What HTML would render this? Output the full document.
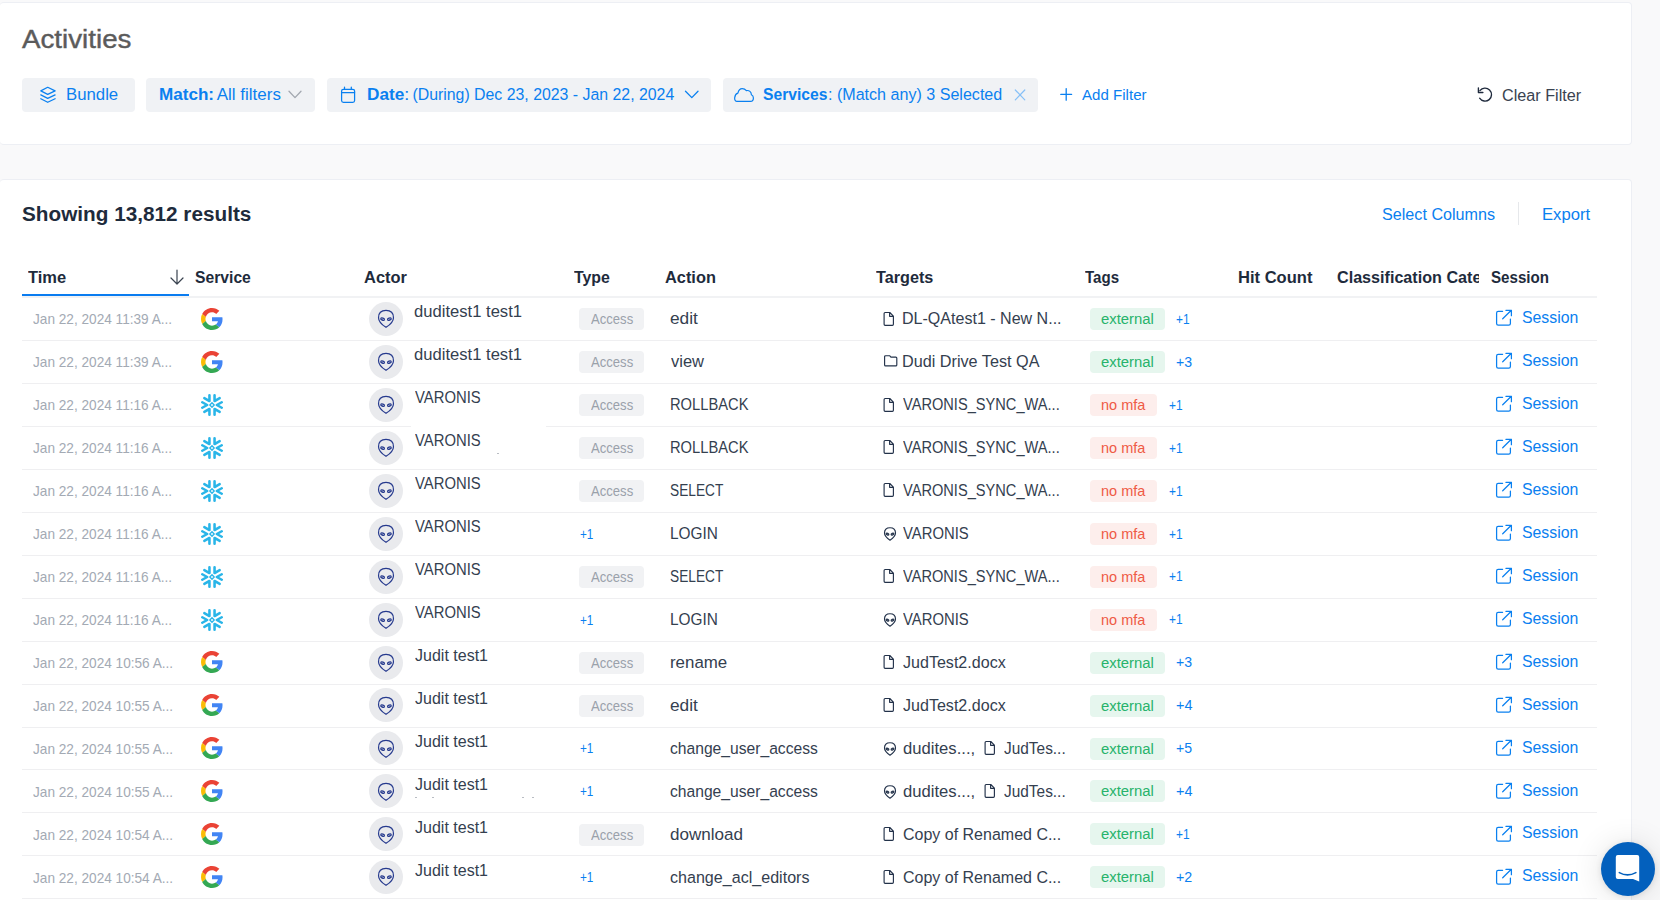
<!DOCTYPE html>
<html><head><meta charset="utf-8"><style>
html,body{margin:0;padding:0;}
body{width:1660px;height:900px;overflow:hidden;position:relative;background:#f9f9fa;font-family:"Liberation Sans",sans-serif;}
.t{position:absolute;white-space:pre;transform-origin:0 0;font-family:"Liberation Sans",sans-serif;}
svg{display:block;}
</style></head><body>
<div style="position:absolute;left:0px;top:2px;width:1632px;height:143px;background:#fff;border-radius:4px;box-sizing:border-box;border:1px solid #edeff4;border-left:none;"></div>
<div style="position:absolute;left:0px;top:179px;width:1632px;height:760px;background:#fff;border-radius:4px;box-sizing:border-box;border:1px solid #edeff4;border-left:none;"></div>
<span class="t" style="left:22.15px;top:26.93px;font-size:25.00px;line-height:25.00px;font-weight:400;color:#5b5b5b;transform:scaleX(1.1095);-webkit-text-stroke:0.4px #5b5b5b;">Activities</span>
<div style="position:absolute;left:22px;top:78px;width:113px;height:34px;background:#f0f2f5;border-radius:4px;"></div>
<div style="position:absolute;left:146px;top:78px;width:169px;height:34px;background:#f0f2f5;border-radius:4px;"></div>
<div style="position:absolute;left:327px;top:78px;width:384px;height:34px;background:#f0f2f5;border-radius:4px;"></div>
<div style="position:absolute;left:723px;top:78px;width:315px;height:34px;background:#f0f2f5;border-radius:4px;"></div>
<span class="t" style="left:66.22px;top:86.10px;font-size:16.30px;line-height:16.30px;font-weight:400;color:#0a80f0;transform:scaleX(1.0293);">Bundle</span>
<span class="t" style="left:158.86px;top:86.10px;font-size:16.30px;line-height:16.30px;font-weight:700;color:#0a80f0;transform:scaleX(1.0494);">Match:</span>
<span class="t" style="left:212.60px;top:86.10px;font-size:16.30px;line-height:16.30px;font-weight:400;color:#0a80f0;transform:scaleX(1.0425);"> All filters</span>
<span class="t" style="left:367.25px;top:86.10px;font-size:16.30px;line-height:16.30px;font-weight:700;color:#0a80f0;transform:scaleX(1.0558);">Date</span>
<span class="t" style="left:404.03px;top:86.10px;font-size:16.30px;line-height:16.30px;font-weight:400;color:#0a80f0;transform:scaleX(1.2058);">:</span>
<span class="t" style="left:408.24px;top:86.10px;font-size:16.30px;line-height:16.30px;font-weight:400;color:#0a80f0;transform:scaleX(0.9740);"> (During) Dec 23, 2023 - Jan 22, 2024</span>
<span class="t" style="left:763.45px;top:86.10px;font-size:16.30px;line-height:16.30px;font-weight:700;color:#0a80f0;transform:scaleX(0.9618);">Services</span>
<span class="t" style="left:827.62px;top:86.10px;font-size:16.30px;line-height:16.30px;font-weight:400;color:#0a80f0;transform:scaleX(0.9873);">: (Match any) 3 Selected</span>
<span class="t" style="left:1082.47px;top:87.75px;font-size:14.82px;line-height:14.82px;font-weight:400;color:#0a80f0;transform:scaleX(1.0185);">Add Filter</span>
<span class="t" style="left:1502.48px;top:86.87px;font-size:16.22px;line-height:16.22px;font-weight:400;color:#3a4350;transform:scaleX(0.9990);">Clear Filter</span>
<svg style="position:absolute;left:36px;top:82px;" width="24" height="24" viewBox="0 0 24 24" fill="none"><g stroke="#0a80f0" stroke-width="1.25" stroke-linejoin="round" stroke-linecap="round"><path d="M11.7 5.3 L19.1 8.9 L11.7 12.4 L4.8 8.9 Z"/><path d="M4.8 12.9 L11.7 16.4 L19.1 12.9"/><path d="M4.8 16.7 L11.7 20.3 L19.1 16.7"/></g></svg>
<svg style="position:absolute;left:286px;top:88px;" width="18" height="14" viewBox="0 0 18 14" fill="none"><path d="M3 3.2 L9 9.6 L15 3.2" stroke="#a3a8b0" stroke-width="1.3" stroke-linecap="round" stroke-linejoin="round"/></svg>
<svg style="position:absolute;left:336px;top:82px;" width="24" height="24" viewBox="0 0 24 24" fill="none"><g stroke="#0a80f0" stroke-width="1.25" stroke-linecap="round"><rect x="5.6" y="7.3" width="13" height="13" rx="1.8"/><path d="M5.6 10.5 H18.6 M8.5 5 V7.3 M15.3 5 V7.3"/></g></svg>
<svg style="position:absolute;left:682px;top:88px;" width="18" height="14" viewBox="0 0 18 14" fill="none"><path d="M3.5 3.2 L9.8 9.6 L16 3.2" stroke="#0a80f0" stroke-width="1.3" stroke-linecap="round" stroke-linejoin="round"/></svg>
<svg style="position:absolute;left:728px;top:82px;" width="32" height="26" viewBox="0 0 32 26" fill="none"><path d="M8.7 19.3 C6.9 19.3 6.5 17.2 6.7 15.6 C7 13.6 8.3 11.6 9.9 11.2 C10.6 8.1 12.2 6.6 14.2 6.6 C16 6.6 17.3 7.3 18.4 8.6 C21.2 8 23.3 9.9 23.4 12.7 C24.9 13.4 25.4 14.7 25.4 15.9 C25.4 18 24.1 19.3 22.5 19.3 Z" stroke="#0a80f0" stroke-width="1.2" stroke-linejoin="round"/></svg>
<svg style="position:absolute;left:1012px;top:87px;" width="16" height="16" viewBox="0 0 16 16" fill="none"><path d="M3.3 3 L12.8 12.8 M12.8 3 L3.3 12.8" stroke="#86c0f7" stroke-width="1.2" stroke-linecap="round"/></svg>
<svg style="position:absolute;left:1057px;top:85px;" width="18" height="18" viewBox="0 0 18 18" fill="none"><path d="M9.2 3.6 V15.2 M3.8 9.4 H14.6" stroke="#0a80f0" stroke-width="1.3" stroke-linecap="round"/></svg>
<svg style="position:absolute;left:1472px;top:82px;" width="26" height="24" viewBox="0 0 26 24" fill="none"><g stroke="#1f2a3d" stroke-width="1.35" stroke-linecap="round" stroke-linejoin="round"><path d="M7.6 16.2 A6.5 6.5 0 1 0 7.9 8.6"/><path d="M6.4 5.8 V10.5 H10.9"/></g></svg>
<span class="t" style="left:21.60px;top:203.77px;font-size:20.82px;line-height:20.82px;font-weight:700;color:#1e2b3c;transform:scaleX(0.9965);">Showing 13,812 results</span>
<span class="t" style="left:1381.67px;top:206.00px;font-size:16.30px;line-height:16.30px;font-weight:400;color:#0a80f0;transform:scaleX(0.9920);">Select Columns</span>
<div style="position:absolute;left:1518px;top:202px;width:1px;height:23px;background:#e6e8eb;border-radius:0px;"></div>
<span class="t" style="left:1541.63px;top:206.00px;font-size:16.30px;line-height:16.30px;font-weight:400;color:#0a80f0;transform:scaleX(1.0237);">Export</span>
<span class="t" style="left:28.11px;top:269.13px;font-size:16.14px;line-height:16.14px;font-weight:700;color:#1e2b3c;transform:scaleX(1.0206);">Time</span>
<span class="t" style="left:195.25px;top:269.13px;font-size:16.14px;line-height:16.14px;font-weight:700;color:#1e2b3c;transform:scaleX(0.9729);">Service</span>
<span class="t" style="left:363.79px;top:269.13px;font-size:16.14px;line-height:16.14px;font-weight:700;color:#1e2b3c;transform:scaleX(1.0208);">Actor</span>
<span class="t" style="left:574.12px;top:269.13px;font-size:16.14px;line-height:16.14px;font-weight:700;color:#1e2b3c;transform:scaleX(0.9841);">Type</span>
<span class="t" style="left:664.69px;top:269.13px;font-size:16.14px;line-height:16.14px;font-weight:700;color:#1e2b3c;transform:scaleX(1.0145);">Action</span>
<span class="t" style="left:875.52px;top:269.13px;font-size:16.14px;line-height:16.14px;font-weight:700;color:#1e2b3c;transform:scaleX(1.0046);">Targets</span>
<span class="t" style="left:1085.13px;top:269.13px;font-size:16.14px;line-height:16.14px;font-weight:700;color:#1e2b3c;transform:scaleX(0.9351);">Tags</span>
<span class="t" style="left:1238.49px;top:269.13px;font-size:16.14px;line-height:16.14px;font-weight:700;color:#1e2b3c;transform:scaleX(1.0258);">Hit Count</span>
<div style="position:absolute;left:1330px;top:260px;width:149px;height:34px;overflow:hidden">
<span class="t" style="left:7.04px;top:9.13px;font-size:16.14px;line-height:16.14px;font-weight:700;color:#1e2b3c;transform:scaleX(1.0007);">Classification Categ</span>
</div>
<span class="t" style="left:1490.96px;top:269.13px;font-size:16.14px;line-height:16.14px;font-weight:700;color:#1e2b3c;transform:scaleX(0.9371);">Session</span>
<svg style="position:absolute;left:166px;top:266px;" width="22" height="22" viewBox="0 0 22 22" fill="none"><path d="M11 4 V17.8 M5 12 L11 18 L17 12" stroke="#3a4350" stroke-width="1.2" stroke-linecap="round" stroke-linejoin="round"/></svg>
<div style="position:absolute;left:22px;top:296px;width:1575px;height:2px;background:#f1f2f4;border-radius:0px;"></div>
<div style="position:absolute;left:22px;top:293.5px;width:167px;height:2.6px;background:#0a7cf0;border-radius:0px;"></div>
<div style="position:absolute;left:22px;top:340px;width:1575px;height:1px;background:#efeff1;border-radius:0px;"></div>
<span class="t" style="left:33.09px;top:312.15px;font-size:14.10px;line-height:14.10px;font-weight:400;color:#a3aab4;transform:scaleX(0.9666);">Jan 22, 2024 11:39 A...</span>
<svg style="position:absolute;left:201px;top:308px;" width="22" height="22" viewBox="0 0 48 48" fill="none"><path fill="#EA4335" d="M24 9.5c3.54 0 6.71 1.22 9.21 3.6l6.85-6.85C35.9 2.38 30.47 0 24 0 14.62 0 6.51 5.38 2.56 13.22l7.98 6.19C12.43 13.72 17.74 9.5 24 9.5z"/><path fill="#4285F4" d="M46.98 24.55c0-1.57-.15-3.09-.38-4.55H24v9.02h12.94c-.58 2.96-2.26 5.48-4.78 7.18l7.73 6c4.51-4.18 7.09-10.36 7.09-17.65z"/><path fill="#FBBC05" d="M10.53 28.59c-.48-1.45-.76-2.99-.76-4.59s.27-3.14.76-4.59l-7.98-6.19C.92 16.46 0 20.12 0 24c0 3.88.92 7.54 2.56 10.78l7.97-6.19z"/><path fill="#34A853" d="M24 48c6.48 0 11.93-2.13 15.89-5.81l-7.73-6c-2.15 1.45-4.92 2.3-8.16 2.3-6.26 0-11.57-4.22-13.47-9.91l-7.98 6.19C6.51 42.62 14.62 48 24 48z"/></svg>
<div style="position:absolute;left:369px;top:301.90px;width:34px;height:34px;border-radius:50%;background:#e9eaed"></div>
<svg style="position:absolute;left:366px;top:299.09999999999997px;" width="40" height="40" viewBox="0 0 900 900" fill="none"><g stroke="#263a8e" stroke-width="27" fill="none" stroke-linejoin="round"><path d="M450 258 C557 258 618 322 618 420 C618 500 560 566 450 638 C340 566 282 500 282 420 C282 322 343 258 450 258 Z"/><ellipse cx="374" cy="452" rx="44" ry="24" transform="rotate(22 374 452)"/><ellipse cx="526" cy="452" rx="44" ry="24" transform="rotate(-22 526 452)"/></g><circle cx="362" cy="456" r="13" fill="#263a8e"/><circle cx="538" cy="456" r="13" fill="#263a8e"/></svg>
<span class="t" style="left:414.10px;top:303.30px;font-size:16.30px;line-height:16.30px;font-weight:400;color:#34404f;transform:scaleX(1.0200);">duditest1 test1</span>
<div style="position:absolute;left:579px;top:308px;width:65px;height:22px;background:#f1f2f4;border-radius:4px;"></div>
<span class="t" style="left:590.67px;top:312.25px;font-size:13.99px;line-height:13.99px;font-weight:400;color:#9aa1ab;transform:scaleX(0.9355);">Access</span>
<span class="t" style="left:670.27px;top:310.33px;font-size:16.26px;line-height:16.26px;font-weight:400;color:#34404f;transform:scaleX(1.0631);">edit</span>
<svg style="position:absolute;left:879px;top:307.59999999999997px;" width="20" height="22" viewBox="0 0 20 22" fill="none"><path d="M6.1 4.5 H10.8 L14.4 8.1 V16.3 A1 1 0 0 1 13.4 17.3 H6.1 A1 1 0 0 1 5.1 16.3 V5.5 A1 1 0 0 1 6.1 4.5 Z M10.6 4.6 V8.3 H14.3" stroke="#23324a" stroke-width="1.15" stroke-linejoin="round" fill="none"/></svg>
<span class="t" style="left:902.08px;top:310.30px;font-size:16.30px;line-height:16.30px;font-weight:400;color:#34404f;transform:scaleX(0.9854);">DL-QAtest1 - New N...</span>
<div style="position:absolute;left:1090px;top:308px;width:75px;height:22px;background:#e6f6ee;border-radius:4px;"></div>
<span class="t" style="left:1101.07px;top:312.02px;font-size:14.26px;line-height:14.26px;font-weight:400;color:#27b36b;transform:scaleX(1.0434);">external</span>
<span class="t" style="left:1176.02px;top:311.79px;font-size:14.66px;line-height:14.66px;font-weight:400;color:#0a80f0;transform:scaleX(0.8143);">+1</span>
<svg style="position:absolute;left:1490px;top:305.4px;" width="28" height="26" viewBox="0 0 28 26" fill="none"><g stroke="#0a80f0" stroke-width="1.25" stroke-linecap="round" stroke-linejoin="round" fill="none"><path d="M12.6 6.3 H8.2 A1.6 1.6 0 0 0 6.6 7.9 V18.6 A1.6 1.6 0 0 0 8.2 20.2 H18.8 A1.6 1.6 0 0 0 20.4 18.6 V14"/><path d="M12.7 13.8 L21.3 5.3 M15.9 5.3 H21.4 V10.7"/></g></svg>
<span class="t" style="left:1521.78px;top:309.07px;font-size:16.45px;line-height:16.45px;font-weight:400;color:#0a80f0;transform:scaleX(0.9629);">Session</span>
<div style="position:absolute;left:22px;top:383px;width:1575px;height:1px;background:#efeff1;border-radius:0px;"></div>
<span class="t" style="left:33.09px;top:355.10px;font-size:14.10px;line-height:14.10px;font-weight:400;color:#a3aab4;transform:scaleX(0.9666);">Jan 22, 2024 11:39 A...</span>
<svg style="position:absolute;left:201px;top:351px;" width="22" height="22" viewBox="0 0 48 48" fill="none"><path fill="#EA4335" d="M24 9.5c3.54 0 6.71 1.22 9.21 3.6l6.85-6.85C35.9 2.38 30.47 0 24 0 14.62 0 6.51 5.38 2.56 13.22l7.98 6.19C12.43 13.72 17.74 9.5 24 9.5z"/><path fill="#4285F4" d="M46.98 24.55c0-1.57-.15-3.09-.38-4.55H24v9.02h12.94c-.58 2.96-2.26 5.48-4.78 7.18l7.73 6c4.51-4.18 7.09-10.36 7.09-17.65z"/><path fill="#FBBC05" d="M10.53 28.59c-.48-1.45-.76-2.99-.76-4.59s.27-3.14.76-4.59l-7.98-6.19C.92 16.46 0 20.12 0 24c0 3.88.92 7.54 2.56 10.78l7.97-6.19z"/><path fill="#34A853" d="M24 48c6.48 0 11.93-2.13 15.89-5.81l-7.73-6c-2.15 1.45-4.92 2.3-8.16 2.3-6.26 0-11.57-4.22-13.47-9.91l-7.98 6.19C6.51 42.62 14.62 48 24 48z"/></svg>
<div style="position:absolute;left:369px;top:344.85px;width:34px;height:34px;border-radius:50%;background:#e9eaed"></div>
<svg style="position:absolute;left:366px;top:342.04999999999995px;" width="40" height="40" viewBox="0 0 900 900" fill="none"><g stroke="#263a8e" stroke-width="27" fill="none" stroke-linejoin="round"><path d="M450 258 C557 258 618 322 618 420 C618 500 560 566 450 638 C340 566 282 500 282 420 C282 322 343 258 450 258 Z"/><ellipse cx="374" cy="452" rx="44" ry="24" transform="rotate(22 374 452)"/><ellipse cx="526" cy="452" rx="44" ry="24" transform="rotate(-22 526 452)"/></g><circle cx="362" cy="456" r="13" fill="#263a8e"/><circle cx="538" cy="456" r="13" fill="#263a8e"/></svg>
<span class="t" style="left:414.10px;top:346.25px;font-size:16.30px;line-height:16.30px;font-weight:400;color:#34404f;transform:scaleX(1.0200);">duditest1 test1</span>
<div style="position:absolute;left:579px;top:351px;width:65px;height:22px;background:#f1f2f4;border-radius:4px;"></div>
<span class="t" style="left:590.67px;top:355.20px;font-size:13.99px;line-height:13.99px;font-weight:400;color:#9aa1ab;transform:scaleX(0.9355);">Access</span>
<span class="t" style="left:670.94px;top:353.28px;font-size:16.26px;line-height:16.26px;font-weight:400;color:#34404f;transform:scaleX(1.0159);">view</span>
<svg style="position:absolute;left:882.5px;top:352.84999999999997px;" width="16" height="16" viewBox="0 0 16 16" fill="none"><path d="M1.6 3.7 A1 1 0 0 1 2.6 2.7 H6.6 L7.9 4.1 H12.8 A1 1 0 0 1 13.8 5.1 V11.9 A1 1 0 0 1 12.8 12.9 H2.6 A1 1 0 0 1 1.6 11.9 Z" stroke="#23324a" stroke-width="1.15" stroke-linejoin="round" fill="none"/></svg>
<span class="t" style="left:902.07px;top:353.25px;font-size:16.30px;line-height:16.30px;font-weight:400;color:#34404f;transform:scaleX(0.9949);">Dudi Drive Test QA</span>
<div style="position:absolute;left:1090px;top:351px;width:75px;height:22px;background:#e6f6ee;border-radius:4px;"></div>
<span class="t" style="left:1101.07px;top:354.97px;font-size:14.26px;line-height:14.26px;font-weight:400;color:#27b36b;transform:scaleX(1.0434);">external</span>
<span class="t" style="left:1175.91px;top:354.74px;font-size:14.66px;line-height:14.66px;font-weight:400;color:#0a80f0;transform:scaleX(0.9633);">+3</span>
<svg style="position:absolute;left:1490px;top:348.34999999999997px;" width="28" height="26" viewBox="0 0 28 26" fill="none"><g stroke="#0a80f0" stroke-width="1.25" stroke-linecap="round" stroke-linejoin="round" fill="none"><path d="M12.6 6.3 H8.2 A1.6 1.6 0 0 0 6.6 7.9 V18.6 A1.6 1.6 0 0 0 8.2 20.2 H18.8 A1.6 1.6 0 0 0 20.4 18.6 V14"/><path d="M12.7 13.8 L21.3 5.3 M15.9 5.3 H21.4 V10.7"/></g></svg>
<span class="t" style="left:1521.78px;top:352.02px;font-size:16.45px;line-height:16.45px;font-weight:400;color:#0a80f0;transform:scaleX(0.9629);">Session</span>
<div style="position:absolute;left:22px;top:426px;width:1575px;height:1px;background:#efeff1;border-radius:0px;"></div>
<div style="position:absolute;left:411px;top:426px;width:135px;height:1px;background:#fff;border-radius:0px;"></div>
<span class="t" style="left:33.09px;top:398.05px;font-size:14.10px;line-height:14.10px;font-weight:400;color:#a3aab4;transform:scaleX(0.9666);">Jan 22, 2024 11:16 A...</span>
<svg style="position:absolute;left:201px;top:394px;" width="22" height="22" viewBox="0 0 22.4 22.2" fill="none"><g stroke="#29b5e8" stroke-width="2.6" stroke-linecap="round" stroke-linejoin="round"><path d="M8.6 1.2 V7.1 L3.4 4.1"/><path d="M13.8 1.2 V7.1 L19 4.1"/><path d="M1.3 8.3 L6.3 11.1 L1.3 13.9"/><path d="M21.1 8.3 L16.1 11.1 L21.1 13.9"/><path d="M8.6 21 V15.1 L3.4 18.1"/><path d="M13.8 21 V15.1 L19 18.1"/></g><path d="M11.2 8.9 L13.4 11.1 L11.2 13.3 L9 11.1 Z" stroke="#29b5e8" stroke-width="1.4" fill="none"/></svg>
<div style="position:absolute;left:369px;top:387.80px;width:34px;height:34px;border-radius:50%;background:#e9eaed"></div>
<svg style="position:absolute;left:366px;top:384.99999999999994px;" width="40" height="40" viewBox="0 0 900 900" fill="none"><g stroke="#263a8e" stroke-width="27" fill="none" stroke-linejoin="round"><path d="M450 258 C557 258 618 322 618 420 C618 500 560 566 450 638 C340 566 282 500 282 420 C282 322 343 258 450 258 Z"/><ellipse cx="374" cy="452" rx="44" ry="24" transform="rotate(22 374 452)"/><ellipse cx="526" cy="452" rx="44" ry="24" transform="rotate(-22 526 452)"/></g><circle cx="362" cy="456" r="13" fill="#263a8e"/><circle cx="538" cy="456" r="13" fill="#263a8e"/></svg>
<span class="t" style="left:414.73px;top:389.20px;font-size:16.30px;line-height:16.30px;font-weight:400;color:#34404f;transform:scaleX(0.9116);">VARONIS</span>
<div style="position:absolute;left:579px;top:394px;width:65px;height:22px;background:#f1f2f4;border-radius:4px;"></div>
<span class="t" style="left:590.67px;top:398.15px;font-size:13.99px;line-height:13.99px;font-weight:400;color:#9aa1ab;transform:scaleX(0.9355);">Access</span>
<span class="t" style="left:669.79px;top:396.23px;font-size:16.26px;line-height:16.26px;font-weight:400;color:#34404f;transform:scaleX(0.9049);">ROLLBACK</span>
<svg style="position:absolute;left:879px;top:393.49999999999994px;" width="20" height="22" viewBox="0 0 20 22" fill="none"><path d="M6.1 4.5 H10.8 L14.4 8.1 V16.3 A1 1 0 0 1 13.4 17.3 H6.1 A1 1 0 0 1 5.1 16.3 V5.5 A1 1 0 0 1 6.1 4.5 Z M10.6 4.6 V8.3 H14.3" stroke="#23324a" stroke-width="1.15" stroke-linejoin="round" fill="none"/></svg>
<span class="t" style="left:903.34px;top:396.20px;font-size:16.30px;line-height:16.30px;font-weight:400;color:#34404f;transform:scaleX(0.8974);">VARONIS_SYNC_WA...</span>
<div style="position:absolute;left:1090px;top:394px;width:67px;height:22px;background:#fdeeec;border-radius:4px;"></div>
<span class="t" style="left:1101.04px;top:397.98px;font-size:14.19px;line-height:14.19px;font-weight:400;color:#ef5a45;transform:scaleX(1.0229);">no mfa</span>
<span class="t" style="left:1169.02px;top:397.69px;font-size:14.66px;line-height:14.66px;font-weight:400;color:#0a80f0;transform:scaleX(0.8143);">+1</span>
<svg style="position:absolute;left:1490px;top:391.29999999999995px;" width="28" height="26" viewBox="0 0 28 26" fill="none"><g stroke="#0a80f0" stroke-width="1.25" stroke-linecap="round" stroke-linejoin="round" fill="none"><path d="M12.6 6.3 H8.2 A1.6 1.6 0 0 0 6.6 7.9 V18.6 A1.6 1.6 0 0 0 8.2 20.2 H18.8 A1.6 1.6 0 0 0 20.4 18.6 V14"/><path d="M12.7 13.8 L21.3 5.3 M15.9 5.3 H21.4 V10.7"/></g></svg>
<span class="t" style="left:1521.78px;top:394.97px;font-size:16.45px;line-height:16.45px;font-weight:400;color:#0a80f0;transform:scaleX(0.9629);">Session</span>
<div style="position:absolute;left:22px;top:469px;width:1575px;height:1px;background:#efeff1;border-radius:0px;"></div>
<span class="t" style="left:33.09px;top:441.00px;font-size:14.10px;line-height:14.10px;font-weight:400;color:#a3aab4;transform:scaleX(0.9666);">Jan 22, 2024 11:16 A...</span>
<svg style="position:absolute;left:201px;top:437px;" width="22" height="22" viewBox="0 0 22.4 22.2" fill="none"><g stroke="#29b5e8" stroke-width="2.6" stroke-linecap="round" stroke-linejoin="round"><path d="M8.6 1.2 V7.1 L3.4 4.1"/><path d="M13.8 1.2 V7.1 L19 4.1"/><path d="M1.3 8.3 L6.3 11.1 L1.3 13.9"/><path d="M21.1 8.3 L16.1 11.1 L21.1 13.9"/><path d="M8.6 21 V15.1 L3.4 18.1"/><path d="M13.8 21 V15.1 L19 18.1"/></g><path d="M11.2 8.9 L13.4 11.1 L11.2 13.3 L9 11.1 Z" stroke="#29b5e8" stroke-width="1.4" fill="none"/></svg>
<div style="position:absolute;left:369px;top:430.75px;width:34px;height:34px;border-radius:50%;background:#e9eaed"></div>
<svg style="position:absolute;left:366px;top:427.95px;" width="40" height="40" viewBox="0 0 900 900" fill="none"><g stroke="#263a8e" stroke-width="27" fill="none" stroke-linejoin="round"><path d="M450 258 C557 258 618 322 618 420 C618 500 560 566 450 638 C340 566 282 500 282 420 C282 322 343 258 450 258 Z"/><ellipse cx="374" cy="452" rx="44" ry="24" transform="rotate(22 374 452)"/><ellipse cx="526" cy="452" rx="44" ry="24" transform="rotate(-22 526 452)"/></g><circle cx="362" cy="456" r="13" fill="#263a8e"/><circle cx="538" cy="456" r="13" fill="#263a8e"/></svg>
<span class="t" style="left:414.73px;top:432.15px;font-size:16.30px;line-height:16.30px;font-weight:400;color:#34404f;transform:scaleX(0.9116);">VARONIS</span>
<div style="position:absolute;left:579px;top:437px;width:65px;height:22px;background:#f1f2f4;border-radius:4px;"></div>
<span class="t" style="left:590.67px;top:441.10px;font-size:13.99px;line-height:13.99px;font-weight:400;color:#9aa1ab;transform:scaleX(0.9355);">Access</span>
<span class="t" style="left:669.79px;top:439.18px;font-size:16.26px;line-height:16.26px;font-weight:400;color:#34404f;transform:scaleX(0.9049);">ROLLBACK</span>
<svg style="position:absolute;left:879px;top:436.45px;" width="20" height="22" viewBox="0 0 20 22" fill="none"><path d="M6.1 4.5 H10.8 L14.4 8.1 V16.3 A1 1 0 0 1 13.4 17.3 H6.1 A1 1 0 0 1 5.1 16.3 V5.5 A1 1 0 0 1 6.1 4.5 Z M10.6 4.6 V8.3 H14.3" stroke="#23324a" stroke-width="1.15" stroke-linejoin="round" fill="none"/></svg>
<span class="t" style="left:903.34px;top:439.15px;font-size:16.30px;line-height:16.30px;font-weight:400;color:#34404f;transform:scaleX(0.8974);">VARONIS_SYNC_WA...</span>
<div style="position:absolute;left:1090px;top:437px;width:67px;height:22px;background:#fdeeec;border-radius:4px;"></div>
<span class="t" style="left:1101.04px;top:440.93px;font-size:14.19px;line-height:14.19px;font-weight:400;color:#ef5a45;transform:scaleX(1.0229);">no mfa</span>
<span class="t" style="left:1169.02px;top:440.64px;font-size:14.66px;line-height:14.66px;font-weight:400;color:#0a80f0;transform:scaleX(0.8143);">+1</span>
<svg style="position:absolute;left:1490px;top:434.25px;" width="28" height="26" viewBox="0 0 28 26" fill="none"><g stroke="#0a80f0" stroke-width="1.25" stroke-linecap="round" stroke-linejoin="round" fill="none"><path d="M12.6 6.3 H8.2 A1.6 1.6 0 0 0 6.6 7.9 V18.6 A1.6 1.6 0 0 0 8.2 20.2 H18.8 A1.6 1.6 0 0 0 20.4 18.6 V14"/><path d="M12.7 13.8 L21.3 5.3 M15.9 5.3 H21.4 V10.7"/></g></svg>
<span class="t" style="left:1521.78px;top:437.92px;font-size:16.45px;line-height:16.45px;font-weight:400;color:#0a80f0;transform:scaleX(0.9629);">Session</span>
<div style="position:absolute;left:22px;top:512px;width:1575px;height:1px;background:#efeff1;border-radius:0px;"></div>
<span class="t" style="left:33.09px;top:483.95px;font-size:14.10px;line-height:14.10px;font-weight:400;color:#a3aab4;transform:scaleX(0.9666);">Jan 22, 2024 11:16 A...</span>
<svg style="position:absolute;left:201px;top:480px;" width="22" height="22" viewBox="0 0 22.4 22.2" fill="none"><g stroke="#29b5e8" stroke-width="2.6" stroke-linecap="round" stroke-linejoin="round"><path d="M8.6 1.2 V7.1 L3.4 4.1"/><path d="M13.8 1.2 V7.1 L19 4.1"/><path d="M1.3 8.3 L6.3 11.1 L1.3 13.9"/><path d="M21.1 8.3 L16.1 11.1 L21.1 13.9"/><path d="M8.6 21 V15.1 L3.4 18.1"/><path d="M13.8 21 V15.1 L19 18.1"/></g><path d="M11.2 8.9 L13.4 11.1 L11.2 13.3 L9 11.1 Z" stroke="#29b5e8" stroke-width="1.4" fill="none"/></svg>
<div style="position:absolute;left:369px;top:473.70px;width:34px;height:34px;border-radius:50%;background:#e9eaed"></div>
<svg style="position:absolute;left:366px;top:470.9px;" width="40" height="40" viewBox="0 0 900 900" fill="none"><g stroke="#263a8e" stroke-width="27" fill="none" stroke-linejoin="round"><path d="M450 258 C557 258 618 322 618 420 C618 500 560 566 450 638 C340 566 282 500 282 420 C282 322 343 258 450 258 Z"/><ellipse cx="374" cy="452" rx="44" ry="24" transform="rotate(22 374 452)"/><ellipse cx="526" cy="452" rx="44" ry="24" transform="rotate(-22 526 452)"/></g><circle cx="362" cy="456" r="13" fill="#263a8e"/><circle cx="538" cy="456" r="13" fill="#263a8e"/></svg>
<span class="t" style="left:414.73px;top:475.10px;font-size:16.30px;line-height:16.30px;font-weight:400;color:#34404f;transform:scaleX(0.9116);">VARONIS</span>
<div style="position:absolute;left:579px;top:480px;width:65px;height:22px;background:#f1f2f4;border-radius:4px;"></div>
<span class="t" style="left:590.67px;top:484.05px;font-size:13.99px;line-height:13.99px;font-weight:400;color:#9aa1ab;transform:scaleX(0.9355);">Access</span>
<span class="t" style="left:670.38px;top:482.13px;font-size:16.26px;line-height:16.26px;font-weight:400;color:#34404f;transform:scaleX(0.8432);">SELECT</span>
<svg style="position:absolute;left:879px;top:479.4px;" width="20" height="22" viewBox="0 0 20 22" fill="none"><path d="M6.1 4.5 H10.8 L14.4 8.1 V16.3 A1 1 0 0 1 13.4 17.3 H6.1 A1 1 0 0 1 5.1 16.3 V5.5 A1 1 0 0 1 6.1 4.5 Z M10.6 4.6 V8.3 H14.3" stroke="#23324a" stroke-width="1.15" stroke-linejoin="round" fill="none"/></svg>
<span class="t" style="left:903.34px;top:482.10px;font-size:16.30px;line-height:16.30px;font-weight:400;color:#34404f;transform:scaleX(0.8974);">VARONIS_SYNC_WA...</span>
<div style="position:absolute;left:1090px;top:480px;width:67px;height:22px;background:#fdeeec;border-radius:4px;"></div>
<span class="t" style="left:1101.04px;top:483.88px;font-size:14.19px;line-height:14.19px;font-weight:400;color:#ef5a45;transform:scaleX(1.0229);">no mfa</span>
<span class="t" style="left:1169.02px;top:483.59px;font-size:14.66px;line-height:14.66px;font-weight:400;color:#0a80f0;transform:scaleX(0.8143);">+1</span>
<svg style="position:absolute;left:1490px;top:477.2px;" width="28" height="26" viewBox="0 0 28 26" fill="none"><g stroke="#0a80f0" stroke-width="1.25" stroke-linecap="round" stroke-linejoin="round" fill="none"><path d="M12.6 6.3 H8.2 A1.6 1.6 0 0 0 6.6 7.9 V18.6 A1.6 1.6 0 0 0 8.2 20.2 H18.8 A1.6 1.6 0 0 0 20.4 18.6 V14"/><path d="M12.7 13.8 L21.3 5.3 M15.9 5.3 H21.4 V10.7"/></g></svg>
<span class="t" style="left:1521.78px;top:480.87px;font-size:16.45px;line-height:16.45px;font-weight:400;color:#0a80f0;transform:scaleX(0.9629);">Session</span>
<div style="position:absolute;left:22px;top:555px;width:1575px;height:1px;background:#efeff1;border-radius:0px;"></div>
<span class="t" style="left:33.09px;top:526.90px;font-size:14.10px;line-height:14.10px;font-weight:400;color:#a3aab4;transform:scaleX(0.9666);">Jan 22, 2024 11:16 A...</span>
<svg style="position:absolute;left:201px;top:523px;" width="22" height="22" viewBox="0 0 22.4 22.2" fill="none"><g stroke="#29b5e8" stroke-width="2.6" stroke-linecap="round" stroke-linejoin="round"><path d="M8.6 1.2 V7.1 L3.4 4.1"/><path d="M13.8 1.2 V7.1 L19 4.1"/><path d="M1.3 8.3 L6.3 11.1 L1.3 13.9"/><path d="M21.1 8.3 L16.1 11.1 L21.1 13.9"/><path d="M8.6 21 V15.1 L3.4 18.1"/><path d="M13.8 21 V15.1 L19 18.1"/></g><path d="M11.2 8.9 L13.4 11.1 L11.2 13.3 L9 11.1 Z" stroke="#29b5e8" stroke-width="1.4" fill="none"/></svg>
<div style="position:absolute;left:369px;top:516.65px;width:34px;height:34px;border-radius:50%;background:#e9eaed"></div>
<svg style="position:absolute;left:366px;top:513.85px;" width="40" height="40" viewBox="0 0 900 900" fill="none"><g stroke="#263a8e" stroke-width="27" fill="none" stroke-linejoin="round"><path d="M450 258 C557 258 618 322 618 420 C618 500 560 566 450 638 C340 566 282 500 282 420 C282 322 343 258 450 258 Z"/><ellipse cx="374" cy="452" rx="44" ry="24" transform="rotate(22 374 452)"/><ellipse cx="526" cy="452" rx="44" ry="24" transform="rotate(-22 526 452)"/></g><circle cx="362" cy="456" r="13" fill="#263a8e"/><circle cx="538" cy="456" r="13" fill="#263a8e"/></svg>
<span class="t" style="left:414.73px;top:518.05px;font-size:16.30px;line-height:16.30px;font-weight:400;color:#34404f;transform:scaleX(0.9116);">VARONIS</span>
<span class="t" style="left:579.53px;top:526.71px;font-size:14.45px;line-height:14.45px;font-weight:400;color:#0a80f0;transform:scaleX(0.8143);">+1</span>
<span class="t" style="left:669.74px;top:525.08px;font-size:16.26px;line-height:16.26px;font-weight:400;color:#34404f;transform:scaleX(0.9472);">LOGIN</span>
<svg style="position:absolute;left:876px;top:520.05px;" width="28" height="28" viewBox="22 20 856 856" fill="none"><g stroke="#23324a" stroke-width="36" fill="none" stroke-linejoin="round"><path d="M450 258 C557 258 618 322 618 420 C618 500 560 566 450 638 C340 566 282 500 282 420 C282 322 343 258 450 258 Z"/><ellipse cx="374" cy="452" rx="44" ry="24" transform="rotate(22 374 452)"/><ellipse cx="526" cy="452" rx="44" ry="24" transform="rotate(-22 526 452)"/></g><circle cx="362" cy="456" r="13" fill="#23324a"/><circle cx="538" cy="456" r="13" fill="#23324a"/></svg>
<span class="t" style="left:903.33px;top:525.05px;font-size:16.30px;line-height:16.30px;font-weight:400;color:#34404f;transform:scaleX(0.9116);">VARONIS</span>
<div style="position:absolute;left:1090px;top:523px;width:67px;height:22px;background:#fdeeec;border-radius:4px;"></div>
<span class="t" style="left:1101.04px;top:526.83px;font-size:14.19px;line-height:14.19px;font-weight:400;color:#ef5a45;transform:scaleX(1.0229);">no mfa</span>
<span class="t" style="left:1169.02px;top:526.54px;font-size:14.66px;line-height:14.66px;font-weight:400;color:#0a80f0;transform:scaleX(0.8143);">+1</span>
<svg style="position:absolute;left:1490px;top:520.15px;" width="28" height="26" viewBox="0 0 28 26" fill="none"><g stroke="#0a80f0" stroke-width="1.25" stroke-linecap="round" stroke-linejoin="round" fill="none"><path d="M12.6 6.3 H8.2 A1.6 1.6 0 0 0 6.6 7.9 V18.6 A1.6 1.6 0 0 0 8.2 20.2 H18.8 A1.6 1.6 0 0 0 20.4 18.6 V14"/><path d="M12.7 13.8 L21.3 5.3 M15.9 5.3 H21.4 V10.7"/></g></svg>
<span class="t" style="left:1521.78px;top:523.82px;font-size:16.45px;line-height:16.45px;font-weight:400;color:#0a80f0;transform:scaleX(0.9629);">Session</span>
<div style="position:absolute;left:22px;top:598px;width:1575px;height:1px;background:#efeff1;border-radius:0px;"></div>
<span class="t" style="left:33.09px;top:569.85px;font-size:14.10px;line-height:14.10px;font-weight:400;color:#a3aab4;transform:scaleX(0.9666);">Jan 22, 2024 11:16 A...</span>
<svg style="position:absolute;left:201px;top:566px;" width="22" height="22" viewBox="0 0 22.4 22.2" fill="none"><g stroke="#29b5e8" stroke-width="2.6" stroke-linecap="round" stroke-linejoin="round"><path d="M8.6 1.2 V7.1 L3.4 4.1"/><path d="M13.8 1.2 V7.1 L19 4.1"/><path d="M1.3 8.3 L6.3 11.1 L1.3 13.9"/><path d="M21.1 8.3 L16.1 11.1 L21.1 13.9"/><path d="M8.6 21 V15.1 L3.4 18.1"/><path d="M13.8 21 V15.1 L19 18.1"/></g><path d="M11.2 8.9 L13.4 11.1 L11.2 13.3 L9 11.1 Z" stroke="#29b5e8" stroke-width="1.4" fill="none"/></svg>
<div style="position:absolute;left:369px;top:559.60px;width:34px;height:34px;border-radius:50%;background:#e9eaed"></div>
<svg style="position:absolute;left:366px;top:556.8000000000001px;" width="40" height="40" viewBox="0 0 900 900" fill="none"><g stroke="#263a8e" stroke-width="27" fill="none" stroke-linejoin="round"><path d="M450 258 C557 258 618 322 618 420 C618 500 560 566 450 638 C340 566 282 500 282 420 C282 322 343 258 450 258 Z"/><ellipse cx="374" cy="452" rx="44" ry="24" transform="rotate(22 374 452)"/><ellipse cx="526" cy="452" rx="44" ry="24" transform="rotate(-22 526 452)"/></g><circle cx="362" cy="456" r="13" fill="#263a8e"/><circle cx="538" cy="456" r="13" fill="#263a8e"/></svg>
<span class="t" style="left:414.73px;top:561.00px;font-size:16.30px;line-height:16.30px;font-weight:400;color:#34404f;transform:scaleX(0.9116);">VARONIS</span>
<div style="position:absolute;left:579px;top:566px;width:65px;height:22px;background:#f1f2f4;border-radius:4px;"></div>
<span class="t" style="left:590.67px;top:569.95px;font-size:13.99px;line-height:13.99px;font-weight:400;color:#9aa1ab;transform:scaleX(0.9355);">Access</span>
<span class="t" style="left:670.38px;top:568.03px;font-size:16.26px;line-height:16.26px;font-weight:400;color:#34404f;transform:scaleX(0.8432);">SELECT</span>
<svg style="position:absolute;left:879px;top:565.3000000000001px;" width="20" height="22" viewBox="0 0 20 22" fill="none"><path d="M6.1 4.5 H10.8 L14.4 8.1 V16.3 A1 1 0 0 1 13.4 17.3 H6.1 A1 1 0 0 1 5.1 16.3 V5.5 A1 1 0 0 1 6.1 4.5 Z M10.6 4.6 V8.3 H14.3" stroke="#23324a" stroke-width="1.15" stroke-linejoin="round" fill="none"/></svg>
<span class="t" style="left:903.34px;top:568.00px;font-size:16.30px;line-height:16.30px;font-weight:400;color:#34404f;transform:scaleX(0.8974);">VARONIS_SYNC_WA...</span>
<div style="position:absolute;left:1090px;top:566px;width:67px;height:22px;background:#fdeeec;border-radius:4px;"></div>
<span class="t" style="left:1101.04px;top:569.78px;font-size:14.19px;line-height:14.19px;font-weight:400;color:#ef5a45;transform:scaleX(1.0229);">no mfa</span>
<span class="t" style="left:1169.02px;top:569.49px;font-size:14.66px;line-height:14.66px;font-weight:400;color:#0a80f0;transform:scaleX(0.8143);">+1</span>
<svg style="position:absolute;left:1490px;top:563.1px;" width="28" height="26" viewBox="0 0 28 26" fill="none"><g stroke="#0a80f0" stroke-width="1.25" stroke-linecap="round" stroke-linejoin="round" fill="none"><path d="M12.6 6.3 H8.2 A1.6 1.6 0 0 0 6.6 7.9 V18.6 A1.6 1.6 0 0 0 8.2 20.2 H18.8 A1.6 1.6 0 0 0 20.4 18.6 V14"/><path d="M12.7 13.8 L21.3 5.3 M15.9 5.3 H21.4 V10.7"/></g></svg>
<span class="t" style="left:1521.78px;top:566.77px;font-size:16.45px;line-height:16.45px;font-weight:400;color:#0a80f0;transform:scaleX(0.9629);">Session</span>
<div style="position:absolute;left:22px;top:641px;width:1575px;height:1px;background:#efeff1;border-radius:0px;"></div>
<span class="t" style="left:33.09px;top:612.80px;font-size:14.10px;line-height:14.10px;font-weight:400;color:#a3aab4;transform:scaleX(0.9666);">Jan 22, 2024 11:16 A...</span>
<svg style="position:absolute;left:201px;top:609px;" width="22" height="22" viewBox="0 0 22.4 22.2" fill="none"><g stroke="#29b5e8" stroke-width="2.6" stroke-linecap="round" stroke-linejoin="round"><path d="M8.6 1.2 V7.1 L3.4 4.1"/><path d="M13.8 1.2 V7.1 L19 4.1"/><path d="M1.3 8.3 L6.3 11.1 L1.3 13.9"/><path d="M21.1 8.3 L16.1 11.1 L21.1 13.9"/><path d="M8.6 21 V15.1 L3.4 18.1"/><path d="M13.8 21 V15.1 L19 18.1"/></g><path d="M11.2 8.9 L13.4 11.1 L11.2 13.3 L9 11.1 Z" stroke="#29b5e8" stroke-width="1.4" fill="none"/></svg>
<div style="position:absolute;left:369px;top:602.55px;width:34px;height:34px;border-radius:50%;background:#e9eaed"></div>
<svg style="position:absolute;left:366px;top:599.75px;" width="40" height="40" viewBox="0 0 900 900" fill="none"><g stroke="#263a8e" stroke-width="27" fill="none" stroke-linejoin="round"><path d="M450 258 C557 258 618 322 618 420 C618 500 560 566 450 638 C340 566 282 500 282 420 C282 322 343 258 450 258 Z"/><ellipse cx="374" cy="452" rx="44" ry="24" transform="rotate(22 374 452)"/><ellipse cx="526" cy="452" rx="44" ry="24" transform="rotate(-22 526 452)"/></g><circle cx="362" cy="456" r="13" fill="#263a8e"/><circle cx="538" cy="456" r="13" fill="#263a8e"/></svg>
<span class="t" style="left:414.73px;top:603.95px;font-size:16.30px;line-height:16.30px;font-weight:400;color:#34404f;transform:scaleX(0.9116);">VARONIS</span>
<span class="t" style="left:579.53px;top:612.61px;font-size:14.45px;line-height:14.45px;font-weight:400;color:#0a80f0;transform:scaleX(0.8143);">+1</span>
<span class="t" style="left:669.74px;top:610.98px;font-size:16.26px;line-height:16.26px;font-weight:400;color:#34404f;transform:scaleX(0.9472);">LOGIN</span>
<svg style="position:absolute;left:876px;top:605.9499999999999px;" width="28" height="28" viewBox="22 20 856 856" fill="none"><g stroke="#23324a" stroke-width="36" fill="none" stroke-linejoin="round"><path d="M450 258 C557 258 618 322 618 420 C618 500 560 566 450 638 C340 566 282 500 282 420 C282 322 343 258 450 258 Z"/><ellipse cx="374" cy="452" rx="44" ry="24" transform="rotate(22 374 452)"/><ellipse cx="526" cy="452" rx="44" ry="24" transform="rotate(-22 526 452)"/></g><circle cx="362" cy="456" r="13" fill="#23324a"/><circle cx="538" cy="456" r="13" fill="#23324a"/></svg>
<span class="t" style="left:903.33px;top:610.95px;font-size:16.30px;line-height:16.30px;font-weight:400;color:#34404f;transform:scaleX(0.9116);">VARONIS</span>
<div style="position:absolute;left:1090px;top:609px;width:67px;height:22px;background:#fdeeec;border-radius:4px;"></div>
<span class="t" style="left:1101.04px;top:612.73px;font-size:14.19px;line-height:14.19px;font-weight:400;color:#ef5a45;transform:scaleX(1.0229);">no mfa</span>
<span class="t" style="left:1169.02px;top:612.44px;font-size:14.66px;line-height:14.66px;font-weight:400;color:#0a80f0;transform:scaleX(0.8143);">+1</span>
<svg style="position:absolute;left:1490px;top:606.05px;" width="28" height="26" viewBox="0 0 28 26" fill="none"><g stroke="#0a80f0" stroke-width="1.25" stroke-linecap="round" stroke-linejoin="round" fill="none"><path d="M12.6 6.3 H8.2 A1.6 1.6 0 0 0 6.6 7.9 V18.6 A1.6 1.6 0 0 0 8.2 20.2 H18.8 A1.6 1.6 0 0 0 20.4 18.6 V14"/><path d="M12.7 13.8 L21.3 5.3 M15.9 5.3 H21.4 V10.7"/></g></svg>
<span class="t" style="left:1521.78px;top:609.72px;font-size:16.45px;line-height:16.45px;font-weight:400;color:#0a80f0;transform:scaleX(0.9629);">Session</span>
<div style="position:absolute;left:22px;top:684px;width:1575px;height:1px;background:#efeff1;border-radius:0px;"></div>
<span class="t" style="left:33.09px;top:655.75px;font-size:14.10px;line-height:14.10px;font-weight:400;color:#a3aab4;transform:scaleX(0.9666);">Jan 22, 2024 10:56 A...</span>
<svg style="position:absolute;left:201px;top:651px;" width="22" height="22" viewBox="0 0 48 48" fill="none"><path fill="#EA4335" d="M24 9.5c3.54 0 6.71 1.22 9.21 3.6l6.85-6.85C35.9 2.38 30.47 0 24 0 14.62 0 6.51 5.38 2.56 13.22l7.98 6.19C12.43 13.72 17.74 9.5 24 9.5z"/><path fill="#4285F4" d="M46.98 24.55c0-1.57-.15-3.09-.38-4.55H24v9.02h12.94c-.58 2.96-2.26 5.48-4.78 7.18l7.73 6c4.51-4.18 7.09-10.36 7.09-17.65z"/><path fill="#FBBC05" d="M10.53 28.59c-.48-1.45-.76-2.99-.76-4.59s.27-3.14.76-4.59l-7.98-6.19C.92 16.46 0 20.12 0 24c0 3.88.92 7.54 2.56 10.78l7.97-6.19z"/><path fill="#34A853" d="M24 48c6.48 0 11.93-2.13 15.89-5.81l-7.73-6c-2.15 1.45-4.92 2.3-8.16 2.3-6.26 0-11.57-4.22-13.47-9.91l-7.98 6.19C6.51 42.62 14.62 48 24 48z"/></svg>
<div style="position:absolute;left:369px;top:645.50px;width:34px;height:34px;border-radius:50%;background:#e9eaed"></div>
<svg style="position:absolute;left:366px;top:642.7px;" width="40" height="40" viewBox="0 0 900 900" fill="none"><g stroke="#263a8e" stroke-width="27" fill="none" stroke-linejoin="round"><path d="M450 258 C557 258 618 322 618 420 C618 500 560 566 450 638 C340 566 282 500 282 420 C282 322 343 258 450 258 Z"/><ellipse cx="374" cy="452" rx="44" ry="24" transform="rotate(22 374 452)"/><ellipse cx="526" cy="452" rx="44" ry="24" transform="rotate(-22 526 452)"/></g><circle cx="362" cy="456" r="13" fill="#263a8e"/><circle cx="538" cy="456" r="13" fill="#263a8e"/></svg>
<span class="t" style="left:414.55px;top:646.90px;font-size:16.30px;line-height:16.30px;font-weight:400;color:#34404f;transform:scaleX(0.9837);">Judit test1</span>
<div style="position:absolute;left:579px;top:652px;width:65px;height:22px;background:#f1f2f4;border-radius:4px;"></div>
<span class="t" style="left:590.67px;top:655.85px;font-size:13.99px;line-height:13.99px;font-weight:400;color:#9aa1ab;transform:scaleX(0.9355);">Access</span>
<span class="t" style="left:669.88px;top:653.93px;font-size:16.26px;line-height:16.26px;font-weight:400;color:#34404f;transform:scaleX(1.0388);">rename</span>
<svg style="position:absolute;left:879px;top:651.2px;" width="20" height="22" viewBox="0 0 20 22" fill="none"><path d="M6.1 4.5 H10.8 L14.4 8.1 V16.3 A1 1 0 0 1 13.4 17.3 H6.1 A1 1 0 0 1 5.1 16.3 V5.5 A1 1 0 0 1 6.1 4.5 Z M10.6 4.6 V8.3 H14.3" stroke="#23324a" stroke-width="1.15" stroke-linejoin="round" fill="none"/></svg>
<span class="t" style="left:903.15px;top:653.90px;font-size:16.30px;line-height:16.30px;font-weight:400;color:#34404f;transform:scaleX(0.9867);">JudTest2.docx</span>
<div style="position:absolute;left:1090px;top:652px;width:75px;height:22px;background:#e6f6ee;border-radius:4px;"></div>
<span class="t" style="left:1101.07px;top:655.62px;font-size:14.26px;line-height:14.26px;font-weight:400;color:#27b36b;transform:scaleX(1.0434);">external</span>
<span class="t" style="left:1175.91px;top:655.39px;font-size:14.66px;line-height:14.66px;font-weight:400;color:#0a80f0;transform:scaleX(0.9633);">+3</span>
<svg style="position:absolute;left:1490px;top:649.0px;" width="28" height="26" viewBox="0 0 28 26" fill="none"><g stroke="#0a80f0" stroke-width="1.25" stroke-linecap="round" stroke-linejoin="round" fill="none"><path d="M12.6 6.3 H8.2 A1.6 1.6 0 0 0 6.6 7.9 V18.6 A1.6 1.6 0 0 0 8.2 20.2 H18.8 A1.6 1.6 0 0 0 20.4 18.6 V14"/><path d="M12.7 13.8 L21.3 5.3 M15.9 5.3 H21.4 V10.7"/></g></svg>
<span class="t" style="left:1521.78px;top:652.67px;font-size:16.45px;line-height:16.45px;font-weight:400;color:#0a80f0;transform:scaleX(0.9629);">Session</span>
<div style="position:absolute;left:22px;top:727px;width:1575px;height:1px;background:#efeff1;border-radius:0px;"></div>
<span class="t" style="left:33.09px;top:698.70px;font-size:14.10px;line-height:14.10px;font-weight:400;color:#a3aab4;transform:scaleX(0.9666);">Jan 22, 2024 10:55 A...</span>
<svg style="position:absolute;left:201px;top:694px;" width="22" height="22" viewBox="0 0 48 48" fill="none"><path fill="#EA4335" d="M24 9.5c3.54 0 6.71 1.22 9.21 3.6l6.85-6.85C35.9 2.38 30.47 0 24 0 14.62 0 6.51 5.38 2.56 13.22l7.98 6.19C12.43 13.72 17.74 9.5 24 9.5z"/><path fill="#4285F4" d="M46.98 24.55c0-1.57-.15-3.09-.38-4.55H24v9.02h12.94c-.58 2.96-2.26 5.48-4.78 7.18l7.73 6c4.51-4.18 7.09-10.36 7.09-17.65z"/><path fill="#FBBC05" d="M10.53 28.59c-.48-1.45-.76-2.99-.76-4.59s.27-3.14.76-4.59l-7.98-6.19C.92 16.46 0 20.12 0 24c0 3.88.92 7.54 2.56 10.78l7.97-6.19z"/><path fill="#34A853" d="M24 48c6.48 0 11.93-2.13 15.89-5.81l-7.73-6c-2.15 1.45-4.92 2.3-8.16 2.3-6.26 0-11.57-4.22-13.47-9.91l-7.98 6.19C6.51 42.62 14.62 48 24 48z"/></svg>
<div style="position:absolute;left:369px;top:688.45px;width:34px;height:34px;border-radius:50%;background:#e9eaed"></div>
<svg style="position:absolute;left:366px;top:685.6500000000001px;" width="40" height="40" viewBox="0 0 900 900" fill="none"><g stroke="#263a8e" stroke-width="27" fill="none" stroke-linejoin="round"><path d="M450 258 C557 258 618 322 618 420 C618 500 560 566 450 638 C340 566 282 500 282 420 C282 322 343 258 450 258 Z"/><ellipse cx="374" cy="452" rx="44" ry="24" transform="rotate(22 374 452)"/><ellipse cx="526" cy="452" rx="44" ry="24" transform="rotate(-22 526 452)"/></g><circle cx="362" cy="456" r="13" fill="#263a8e"/><circle cx="538" cy="456" r="13" fill="#263a8e"/></svg>
<span class="t" style="left:414.55px;top:689.85px;font-size:16.30px;line-height:16.30px;font-weight:400;color:#34404f;transform:scaleX(0.9837);">Judit test1</span>
<div style="position:absolute;left:579px;top:695px;width:65px;height:22px;background:#f1f2f4;border-radius:4px;"></div>
<span class="t" style="left:590.67px;top:698.80px;font-size:13.99px;line-height:13.99px;font-weight:400;color:#9aa1ab;transform:scaleX(0.9355);">Access</span>
<span class="t" style="left:670.27px;top:696.88px;font-size:16.26px;line-height:16.26px;font-weight:400;color:#34404f;transform:scaleX(1.0631);">edit</span>
<svg style="position:absolute;left:879px;top:694.1500000000001px;" width="20" height="22" viewBox="0 0 20 22" fill="none"><path d="M6.1 4.5 H10.8 L14.4 8.1 V16.3 A1 1 0 0 1 13.4 17.3 H6.1 A1 1 0 0 1 5.1 16.3 V5.5 A1 1 0 0 1 6.1 4.5 Z M10.6 4.6 V8.3 H14.3" stroke="#23324a" stroke-width="1.15" stroke-linejoin="round" fill="none"/></svg>
<span class="t" style="left:903.15px;top:696.85px;font-size:16.30px;line-height:16.30px;font-weight:400;color:#34404f;transform:scaleX(0.9867);">JudTest2.docx</span>
<div style="position:absolute;left:1090px;top:695px;width:75px;height:22px;background:#e6f6ee;border-radius:4px;"></div>
<span class="t" style="left:1101.07px;top:698.57px;font-size:14.26px;line-height:14.26px;font-weight:400;color:#27b36b;transform:scaleX(1.0434);">external</span>
<span class="t" style="left:1175.89px;top:698.34px;font-size:14.66px;line-height:14.66px;font-weight:400;color:#0a80f0;transform:scaleX(0.9855);">+4</span>
<svg style="position:absolute;left:1490px;top:691.95px;" width="28" height="26" viewBox="0 0 28 26" fill="none"><g stroke="#0a80f0" stroke-width="1.25" stroke-linecap="round" stroke-linejoin="round" fill="none"><path d="M12.6 6.3 H8.2 A1.6 1.6 0 0 0 6.6 7.9 V18.6 A1.6 1.6 0 0 0 8.2 20.2 H18.8 A1.6 1.6 0 0 0 20.4 18.6 V14"/><path d="M12.7 13.8 L21.3 5.3 M15.9 5.3 H21.4 V10.7"/></g></svg>
<span class="t" style="left:1521.78px;top:695.62px;font-size:16.45px;line-height:16.45px;font-weight:400;color:#0a80f0;transform:scaleX(0.9629);">Session</span>
<div style="position:absolute;left:22px;top:769px;width:1575px;height:1px;background:#efeff1;border-radius:0px;"></div>
<span class="t" style="left:33.09px;top:741.65px;font-size:14.10px;line-height:14.10px;font-weight:400;color:#a3aab4;transform:scaleX(0.9666);">Jan 22, 2024 10:55 A...</span>
<svg style="position:absolute;left:201px;top:737px;" width="22" height="22" viewBox="0 0 48 48" fill="none"><path fill="#EA4335" d="M24 9.5c3.54 0 6.71 1.22 9.21 3.6l6.85-6.85C35.9 2.38 30.47 0 24 0 14.62 0 6.51 5.38 2.56 13.22l7.98 6.19C12.43 13.72 17.74 9.5 24 9.5z"/><path fill="#4285F4" d="M46.98 24.55c0-1.57-.15-3.09-.38-4.55H24v9.02h12.94c-.58 2.96-2.26 5.48-4.78 7.18l7.73 6c4.51-4.18 7.09-10.36 7.09-17.65z"/><path fill="#FBBC05" d="M10.53 28.59c-.48-1.45-.76-2.99-.76-4.59s.27-3.14.76-4.59l-7.98-6.19C.92 16.46 0 20.12 0 24c0 3.88.92 7.54 2.56 10.78l7.97-6.19z"/><path fill="#34A853" d="M24 48c6.48 0 11.93-2.13 15.89-5.81l-7.73-6c-2.15 1.45-4.92 2.3-8.16 2.3-6.26 0-11.57-4.22-13.47-9.91l-7.98 6.19C6.51 42.62 14.62 48 24 48z"/></svg>
<div style="position:absolute;left:369px;top:731.40px;width:34px;height:34px;border-radius:50%;background:#e9eaed"></div>
<svg style="position:absolute;left:366px;top:728.6px;" width="40" height="40" viewBox="0 0 900 900" fill="none"><g stroke="#263a8e" stroke-width="27" fill="none" stroke-linejoin="round"><path d="M450 258 C557 258 618 322 618 420 C618 500 560 566 450 638 C340 566 282 500 282 420 C282 322 343 258 450 258 Z"/><ellipse cx="374" cy="452" rx="44" ry="24" transform="rotate(22 374 452)"/><ellipse cx="526" cy="452" rx="44" ry="24" transform="rotate(-22 526 452)"/></g><circle cx="362" cy="456" r="13" fill="#263a8e"/><circle cx="538" cy="456" r="13" fill="#263a8e"/></svg>
<span class="t" style="left:414.55px;top:732.80px;font-size:16.30px;line-height:16.30px;font-weight:400;color:#34404f;transform:scaleX(0.9837);">Judit test1</span>
<span class="t" style="left:579.53px;top:741.46px;font-size:14.45px;line-height:14.45px;font-weight:400;color:#0a80f0;transform:scaleX(0.8143);">+1</span>
<span class="t" style="left:670.34px;top:739.83px;font-size:16.26px;line-height:16.26px;font-weight:400;color:#34404f;transform:scaleX(0.9625);">change_user_access</span>
<svg style="position:absolute;left:876px;top:734.8px;" width="28" height="28" viewBox="22 20 856 856" fill="none"><g stroke="#23324a" stroke-width="36" fill="none" stroke-linejoin="round"><path d="M450 258 C557 258 618 322 618 420 C618 500 560 566 450 638 C340 566 282 500 282 420 C282 322 343 258 450 258 Z"/><ellipse cx="374" cy="452" rx="44" ry="24" transform="rotate(22 374 452)"/><ellipse cx="526" cy="452" rx="44" ry="24" transform="rotate(-22 526 452)"/></g><circle cx="362" cy="456" r="13" fill="#23324a"/><circle cx="538" cy="456" r="13" fill="#23324a"/></svg>
<span class="t" style="left:902.70px;top:739.80px;font-size:16.30px;line-height:16.30px;font-weight:400;color:#34404f;transform:scaleX(1.0220);">dudites...,</span>
<svg style="position:absolute;left:980px;top:737.1px;" width="20" height="22" viewBox="0 0 20 22" fill="none"><path d="M6.1 4.5 H10.8 L14.4 8.1 V16.3 A1 1 0 0 1 13.4 17.3 H6.1 A1 1 0 0 1 5.1 16.3 V5.5 A1 1 0 0 1 6.1 4.5 Z M10.6 4.6 V8.3 H14.3" stroke="#23324a" stroke-width="1.15" stroke-linejoin="round" fill="none"/></svg>
<span class="t" style="left:1004.16px;top:739.80px;font-size:16.30px;line-height:16.30px;font-weight:400;color:#34404f;transform:scaleX(0.9467);">JudTes...</span>
<div style="position:absolute;left:1090px;top:738px;width:75px;height:22px;background:#e6f6ee;border-radius:4px;"></div>
<span class="t" style="left:1101.07px;top:741.52px;font-size:14.26px;line-height:14.26px;font-weight:400;color:#27b36b;transform:scaleX(1.0434);">external</span>
<span class="t" style="left:1175.91px;top:741.29px;font-size:14.66px;line-height:14.66px;font-weight:400;color:#0a80f0;transform:scaleX(0.9624);">+5</span>
<svg style="position:absolute;left:1490px;top:734.9px;" width="28" height="26" viewBox="0 0 28 26" fill="none"><g stroke="#0a80f0" stroke-width="1.25" stroke-linecap="round" stroke-linejoin="round" fill="none"><path d="M12.6 6.3 H8.2 A1.6 1.6 0 0 0 6.6 7.9 V18.6 A1.6 1.6 0 0 0 8.2 20.2 H18.8 A1.6 1.6 0 0 0 20.4 18.6 V14"/><path d="M12.7 13.8 L21.3 5.3 M15.9 5.3 H21.4 V10.7"/></g></svg>
<span class="t" style="left:1521.78px;top:738.57px;font-size:16.45px;line-height:16.45px;font-weight:400;color:#0a80f0;transform:scaleX(0.9629);">Session</span>
<div style="position:absolute;left:22px;top:812px;width:1575px;height:1px;background:#efeff1;border-radius:0px;"></div>
<span class="t" style="left:33.09px;top:784.60px;font-size:14.10px;line-height:14.10px;font-weight:400;color:#a3aab4;transform:scaleX(0.9666);">Jan 22, 2024 10:55 A...</span>
<svg style="position:absolute;left:201px;top:780px;" width="22" height="22" viewBox="0 0 48 48" fill="none"><path fill="#EA4335" d="M24 9.5c3.54 0 6.71 1.22 9.21 3.6l6.85-6.85C35.9 2.38 30.47 0 24 0 14.62 0 6.51 5.38 2.56 13.22l7.98 6.19C12.43 13.72 17.74 9.5 24 9.5z"/><path fill="#4285F4" d="M46.98 24.55c0-1.57-.15-3.09-.38-4.55H24v9.02h12.94c-.58 2.96-2.26 5.48-4.78 7.18l7.73 6c4.51-4.18 7.09-10.36 7.09-17.65z"/><path fill="#FBBC05" d="M10.53 28.59c-.48-1.45-.76-2.99-.76-4.59s.27-3.14.76-4.59l-7.98-6.19C.92 16.46 0 20.12 0 24c0 3.88.92 7.54 2.56 10.78l7.97-6.19z"/><path fill="#34A853" d="M24 48c6.48 0 11.93-2.13 15.89-5.81l-7.73-6c-2.15 1.45-4.92 2.3-8.16 2.3-6.26 0-11.57-4.22-13.47-9.91l-7.98 6.19C6.51 42.62 14.62 48 24 48z"/></svg>
<div style="position:absolute;left:369px;top:774.35px;width:34px;height:34px;border-radius:50%;background:#e9eaed"></div>
<svg style="position:absolute;left:366px;top:771.5500000000001px;" width="40" height="40" viewBox="0 0 900 900" fill="none"><g stroke="#263a8e" stroke-width="27" fill="none" stroke-linejoin="round"><path d="M450 258 C557 258 618 322 618 420 C618 500 560 566 450 638 C340 566 282 500 282 420 C282 322 343 258 450 258 Z"/><ellipse cx="374" cy="452" rx="44" ry="24" transform="rotate(22 374 452)"/><ellipse cx="526" cy="452" rx="44" ry="24" transform="rotate(-22 526 452)"/></g><circle cx="362" cy="456" r="13" fill="#263a8e"/><circle cx="538" cy="456" r="13" fill="#263a8e"/></svg>
<span class="t" style="left:414.55px;top:775.75px;font-size:16.30px;line-height:16.30px;font-weight:400;color:#34404f;transform:scaleX(0.9837);">Judit test1</span>
<span class="t" style="left:579.53px;top:784.41px;font-size:14.45px;line-height:14.45px;font-weight:400;color:#0a80f0;transform:scaleX(0.8143);">+1</span>
<span class="t" style="left:670.34px;top:782.78px;font-size:16.26px;line-height:16.26px;font-weight:400;color:#34404f;transform:scaleX(0.9625);">change_user_access</span>
<svg style="position:absolute;left:876px;top:777.75px;" width="28" height="28" viewBox="22 20 856 856" fill="none"><g stroke="#23324a" stroke-width="36" fill="none" stroke-linejoin="round"><path d="M450 258 C557 258 618 322 618 420 C618 500 560 566 450 638 C340 566 282 500 282 420 C282 322 343 258 450 258 Z"/><ellipse cx="374" cy="452" rx="44" ry="24" transform="rotate(22 374 452)"/><ellipse cx="526" cy="452" rx="44" ry="24" transform="rotate(-22 526 452)"/></g><circle cx="362" cy="456" r="13" fill="#23324a"/><circle cx="538" cy="456" r="13" fill="#23324a"/></svg>
<span class="t" style="left:902.70px;top:782.75px;font-size:16.30px;line-height:16.30px;font-weight:400;color:#34404f;transform:scaleX(1.0220);">dudites...,</span>
<svg style="position:absolute;left:980px;top:780.0500000000001px;" width="20" height="22" viewBox="0 0 20 22" fill="none"><path d="M6.1 4.5 H10.8 L14.4 8.1 V16.3 A1 1 0 0 1 13.4 17.3 H6.1 A1 1 0 0 1 5.1 16.3 V5.5 A1 1 0 0 1 6.1 4.5 Z M10.6 4.6 V8.3 H14.3" stroke="#23324a" stroke-width="1.15" stroke-linejoin="round" fill="none"/></svg>
<span class="t" style="left:1004.16px;top:782.75px;font-size:16.30px;line-height:16.30px;font-weight:400;color:#34404f;transform:scaleX(0.9467);">JudTes...</span>
<div style="position:absolute;left:1090px;top:780px;width:75px;height:22px;background:#e6f6ee;border-radius:4px;"></div>
<span class="t" style="left:1101.07px;top:784.47px;font-size:14.26px;line-height:14.26px;font-weight:400;color:#27b36b;transform:scaleX(1.0434);">external</span>
<span class="t" style="left:1175.89px;top:784.24px;font-size:14.66px;line-height:14.66px;font-weight:400;color:#0a80f0;transform:scaleX(0.9855);">+4</span>
<svg style="position:absolute;left:1490px;top:777.85px;" width="28" height="26" viewBox="0 0 28 26" fill="none"><g stroke="#0a80f0" stroke-width="1.25" stroke-linecap="round" stroke-linejoin="round" fill="none"><path d="M12.6 6.3 H8.2 A1.6 1.6 0 0 0 6.6 7.9 V18.6 A1.6 1.6 0 0 0 8.2 20.2 H18.8 A1.6 1.6 0 0 0 20.4 18.6 V14"/><path d="M12.7 13.8 L21.3 5.3 M15.9 5.3 H21.4 V10.7"/></g></svg>
<span class="t" style="left:1521.78px;top:781.52px;font-size:16.45px;line-height:16.45px;font-weight:400;color:#0a80f0;transform:scaleX(0.9629);">Session</span>
<div style="position:absolute;left:22px;top:855px;width:1575px;height:1px;background:#efeff1;border-radius:0px;"></div>
<span class="t" style="left:33.09px;top:827.55px;font-size:14.10px;line-height:14.10px;font-weight:400;color:#a3aab4;transform:scaleX(0.9666);">Jan 22, 2024 10:54 A...</span>
<svg style="position:absolute;left:201px;top:823px;" width="22" height="22" viewBox="0 0 48 48" fill="none"><path fill="#EA4335" d="M24 9.5c3.54 0 6.71 1.22 9.21 3.6l6.85-6.85C35.9 2.38 30.47 0 24 0 14.62 0 6.51 5.38 2.56 13.22l7.98 6.19C12.43 13.72 17.74 9.5 24 9.5z"/><path fill="#4285F4" d="M46.98 24.55c0-1.57-.15-3.09-.38-4.55H24v9.02h12.94c-.58 2.96-2.26 5.48-4.78 7.18l7.73 6c4.51-4.18 7.09-10.36 7.09-17.65z"/><path fill="#FBBC05" d="M10.53 28.59c-.48-1.45-.76-2.99-.76-4.59s.27-3.14.76-4.59l-7.98-6.19C.92 16.46 0 20.12 0 24c0 3.88.92 7.54 2.56 10.78l7.97-6.19z"/><path fill="#34A853" d="M24 48c6.48 0 11.93-2.13 15.89-5.81l-7.73-6c-2.15 1.45-4.92 2.3-8.16 2.3-6.26 0-11.57-4.22-13.47-9.91l-7.98 6.19C6.51 42.62 14.62 48 24 48z"/></svg>
<div style="position:absolute;left:369px;top:817.30px;width:34px;height:34px;border-radius:50%;background:#e9eaed"></div>
<svg style="position:absolute;left:366px;top:814.5000000000001px;" width="40" height="40" viewBox="0 0 900 900" fill="none"><g stroke="#263a8e" stroke-width="27" fill="none" stroke-linejoin="round"><path d="M450 258 C557 258 618 322 618 420 C618 500 560 566 450 638 C340 566 282 500 282 420 C282 322 343 258 450 258 Z"/><ellipse cx="374" cy="452" rx="44" ry="24" transform="rotate(22 374 452)"/><ellipse cx="526" cy="452" rx="44" ry="24" transform="rotate(-22 526 452)"/></g><circle cx="362" cy="456" r="13" fill="#263a8e"/><circle cx="538" cy="456" r="13" fill="#263a8e"/></svg>
<span class="t" style="left:414.55px;top:818.70px;font-size:16.30px;line-height:16.30px;font-weight:400;color:#34404f;transform:scaleX(0.9837);">Judit test1</span>
<div style="position:absolute;left:579px;top:824px;width:65px;height:22px;background:#f1f2f4;border-radius:4px;"></div>
<span class="t" style="left:590.67px;top:827.65px;font-size:13.99px;line-height:13.99px;font-weight:400;color:#9aa1ab;transform:scaleX(0.9355);">Access</span>
<span class="t" style="left:670.28px;top:825.73px;font-size:16.26px;line-height:16.26px;font-weight:400;color:#34404f;transform:scaleX(1.0498);">download</span>
<svg style="position:absolute;left:879px;top:823.0000000000001px;" width="20" height="22" viewBox="0 0 20 22" fill="none"><path d="M6.1 4.5 H10.8 L14.4 8.1 V16.3 A1 1 0 0 1 13.4 17.3 H6.1 A1 1 0 0 1 5.1 16.3 V5.5 A1 1 0 0 1 6.1 4.5 Z M10.6 4.6 V8.3 H14.3" stroke="#23324a" stroke-width="1.15" stroke-linejoin="round" fill="none"/></svg>
<span class="t" style="left:902.59px;top:825.70px;font-size:16.30px;line-height:16.30px;font-weight:400;color:#34404f;transform:scaleX(0.9825);">Copy of Renamed C...</span>
<div style="position:absolute;left:1090px;top:823px;width:75px;height:22px;background:#e6f6ee;border-radius:4px;"></div>
<span class="t" style="left:1101.07px;top:827.42px;font-size:14.26px;line-height:14.26px;font-weight:400;color:#27b36b;transform:scaleX(1.0434);">external</span>
<span class="t" style="left:1176.02px;top:827.19px;font-size:14.66px;line-height:14.66px;font-weight:400;color:#0a80f0;transform:scaleX(0.8143);">+1</span>
<svg style="position:absolute;left:1490px;top:820.8000000000001px;" width="28" height="26" viewBox="0 0 28 26" fill="none"><g stroke="#0a80f0" stroke-width="1.25" stroke-linecap="round" stroke-linejoin="round" fill="none"><path d="M12.6 6.3 H8.2 A1.6 1.6 0 0 0 6.6 7.9 V18.6 A1.6 1.6 0 0 0 8.2 20.2 H18.8 A1.6 1.6 0 0 0 20.4 18.6 V14"/><path d="M12.7 13.8 L21.3 5.3 M15.9 5.3 H21.4 V10.7"/></g></svg>
<span class="t" style="left:1521.78px;top:824.47px;font-size:16.45px;line-height:16.45px;font-weight:400;color:#0a80f0;transform:scaleX(0.9629);">Session</span>
<div style="position:absolute;left:22px;top:898px;width:1575px;height:1px;background:#efeff1;border-radius:0px;"></div>
<span class="t" style="left:33.09px;top:870.50px;font-size:14.10px;line-height:14.10px;font-weight:400;color:#a3aab4;transform:scaleX(0.9666);">Jan 22, 2024 10:54 A...</span>
<svg style="position:absolute;left:201px;top:866px;" width="22" height="22" viewBox="0 0 48 48" fill="none"><path fill="#EA4335" d="M24 9.5c3.54 0 6.71 1.22 9.21 3.6l6.85-6.85C35.9 2.38 30.47 0 24 0 14.62 0 6.51 5.38 2.56 13.22l7.98 6.19C12.43 13.72 17.74 9.5 24 9.5z"/><path fill="#4285F4" d="M46.98 24.55c0-1.57-.15-3.09-.38-4.55H24v9.02h12.94c-.58 2.96-2.26 5.48-4.78 7.18l7.73 6c4.51-4.18 7.09-10.36 7.09-17.65z"/><path fill="#FBBC05" d="M10.53 28.59c-.48-1.45-.76-2.99-.76-4.59s.27-3.14.76-4.59l-7.98-6.19C.92 16.46 0 20.12 0 24c0 3.88.92 7.54 2.56 10.78l7.97-6.19z"/><path fill="#34A853" d="M24 48c6.48 0 11.93-2.13 15.89-5.81l-7.73-6c-2.15 1.45-4.92 2.3-8.16 2.3-6.26 0-11.57-4.22-13.47-9.91l-7.98 6.19C6.51 42.62 14.62 48 24 48z"/></svg>
<div style="position:absolute;left:369px;top:860.25px;width:34px;height:34px;border-radius:50%;background:#e9eaed"></div>
<svg style="position:absolute;left:366px;top:857.45px;" width="40" height="40" viewBox="0 0 900 900" fill="none"><g stroke="#263a8e" stroke-width="27" fill="none" stroke-linejoin="round"><path d="M450 258 C557 258 618 322 618 420 C618 500 560 566 450 638 C340 566 282 500 282 420 C282 322 343 258 450 258 Z"/><ellipse cx="374" cy="452" rx="44" ry="24" transform="rotate(22 374 452)"/><ellipse cx="526" cy="452" rx="44" ry="24" transform="rotate(-22 526 452)"/></g><circle cx="362" cy="456" r="13" fill="#263a8e"/><circle cx="538" cy="456" r="13" fill="#263a8e"/></svg>
<span class="t" style="left:414.55px;top:861.65px;font-size:16.30px;line-height:16.30px;font-weight:400;color:#34404f;transform:scaleX(0.9837);">Judit test1</span>
<span class="t" style="left:579.53px;top:870.31px;font-size:14.45px;line-height:14.45px;font-weight:400;color:#0a80f0;transform:scaleX(0.8143);">+1</span>
<span class="t" style="left:670.32px;top:868.68px;font-size:16.26px;line-height:16.26px;font-weight:400;color:#34404f;transform:scaleX(0.9896);">change_acl_editors</span>
<svg style="position:absolute;left:879px;top:865.95px;" width="20" height="22" viewBox="0 0 20 22" fill="none"><path d="M6.1 4.5 H10.8 L14.4 8.1 V16.3 A1 1 0 0 1 13.4 17.3 H6.1 A1 1 0 0 1 5.1 16.3 V5.5 A1 1 0 0 1 6.1 4.5 Z M10.6 4.6 V8.3 H14.3" stroke="#23324a" stroke-width="1.15" stroke-linejoin="round" fill="none"/></svg>
<span class="t" style="left:902.59px;top:868.65px;font-size:16.30px;line-height:16.30px;font-weight:400;color:#34404f;transform:scaleX(0.9825);">Copy of Renamed C...</span>
<div style="position:absolute;left:1090px;top:866px;width:75px;height:22px;background:#e6f6ee;border-radius:4px;"></div>
<span class="t" style="left:1101.07px;top:870.37px;font-size:14.26px;line-height:14.26px;font-weight:400;color:#27b36b;transform:scaleX(1.0434);">external</span>
<span class="t" style="left:1175.90px;top:870.14px;font-size:14.66px;line-height:14.66px;font-weight:400;color:#0a80f0;transform:scaleX(0.9738);">+2</span>
<svg style="position:absolute;left:1490px;top:863.75px;" width="28" height="26" viewBox="0 0 28 26" fill="none"><g stroke="#0a80f0" stroke-width="1.25" stroke-linecap="round" stroke-linejoin="round" fill="none"><path d="M12.6 6.3 H8.2 A1.6 1.6 0 0 0 6.6 7.9 V18.6 A1.6 1.6 0 0 0 8.2 20.2 H18.8 A1.6 1.6 0 0 0 20.4 18.6 V14"/><path d="M12.7 13.8 L21.3 5.3 M15.9 5.3 H21.4 V10.7"/></g></svg>
<span class="t" style="left:1521.78px;top:867.42px;font-size:16.45px;line-height:16.45px;font-weight:400;color:#0a80f0;transform:scaleX(0.9629);">Session</span>
<div style="position:absolute;left:497px;top:453px;width:1.5px;height:1px;background:#b9bdc3;border-radius:0px;"></div>
<div style="position:absolute;left:415px;top:797px;width:1.5px;height:1px;background:#b9bdc3;border-radius:0px;"></div>
<div style="position:absolute;left:432px;top:797px;width:1.5px;height:1px;background:#b9bdc3;border-radius:0px;"></div>
<div style="position:absolute;left:522px;top:797px;width:1.5px;height:1px;background:#b9bdc3;border-radius:0px;"></div>
<div style="position:absolute;left:532px;top:797px;width:1.5px;height:1px;background:#b9bdc3;border-radius:0px;"></div>
<div style="position:absolute;left:1601px;top:842px;width:54px;height:54px;border-radius:50%;background:#0360bd;box-shadow:0 1px 6px rgba(0,0,0,0.10),0 2px 32px rgba(0,0,0,0.12)"></div>
<svg style="position:absolute;left:1601px;top:842px;" width="54" height="54" viewBox="0 0 54 54" fill="none"><path d="M16.8 13 H36.2 A2 2 0 0 1 38.2 15 V39.6 L32 37 H16.8 A2 2 0 0 1 14.8 35 V15 A2 2 0 0 1 16.8 13 Z" fill="#fff"/><path d="M18.3 30.6 Q26.5 35.2 34.9 30.6" stroke="#0360bd" stroke-width="1.6" stroke-linecap="round" fill="none"/></svg>
</body></html>
